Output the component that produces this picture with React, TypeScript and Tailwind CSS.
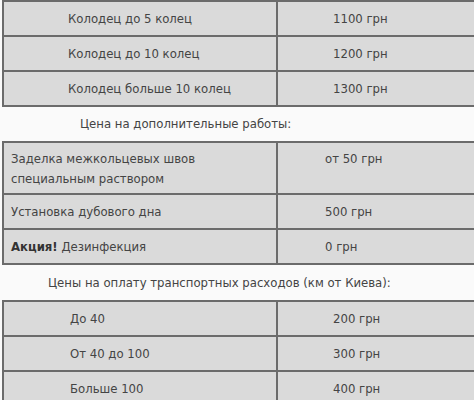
const mainRows = [
  { name: "Колодец до 5 колец", price: "1100 грн" },
  { name: "Колодец до 10 колец", price: "1200 грн" },
  { name: "Колодец больше 10 колец", price: "1300 грн" },
];

const transportRows = [
  { name: "До 40", price: "200 грн" },
  { name: "От 40 до 100", price: "300 грн" },
  { name: "Больше 100", price: "400 грн" },
];

function Row({
  left,
  right,
  leftClass = "pl-[64px]",
  rightClass = "pl-[55px]",
  h = "h-[35px]",
}: {
  left: React.ReactNode;
  right: React.ReactNode;
  leftClass?: string;
  rightClass?: string;
  h?: string;
}) {
  return (
    <div className={`flex ${h} border-b-2 border-[#6b6b6b]`}>
      <div className={`w-[274px] flex items-center border-r-2 border-[#6b6b6b] ${leftClass}`}>
        {left}
      </div>
      <div className={`flex-1 flex items-center ${rightClass}`}>{right}</div>
    </div>
  );
}

export default function App() {
  return (
    <div
      className="w-[474px] h-[400px] overflow-hidden bg-[#fafafa] text-[#444] text-[13px] pl-[2px]"
      style={{ fontFamily: "'DejaVu Sans Condensed', 'Liberation Sans', sans-serif" }}
    >
      {/* основные цены */}
      <div className="w-[478px] bg-[#dadada] border-l-2 border-t-2 border-[#6b6b6b]">
        {mainRows.map((r) => (
          <Row key={r.name} left={r.name} right={r.price} />
        ))}
      </div>

      <div className="h-[34px] flex items-center pl-[78px]">
        Цена на дополнительные работы:
      </div>

      <div className="w-[478px] bg-[#dadada] border-l-2 border-t-2 border-[#6b6b6b]">
        <Row
          h="h-[52px]"
          leftClass="pl-[7px] items-start pt-[6px] leading-[20px]"
          rightClass="pl-[47px] items-start pt-[6px] leading-[20px]"
          left={
            <span>
              Заделка межкольцевых швов
              <br />
              специальным раствором
            </span>
          }
          right="от 50 грн"
        />
        <Row leftClass="pl-[7px]" rightClass="pl-[47px]" left="Установка дубового дна" right="500 грн" />
        <Row
          leftClass="pl-[7px]"
          rightClass="pl-[47px]"
          left={
            <span>
              <b className="text-[#333]">Акция!</b> Дезинфекция
            </span>
          }
          right="0 грн"
        />
      </div>

      <div className="h-[35px] flex items-center pl-[46px]">
        Цены на оплату транспортных расходов (км от Киева):
      </div>

      <div className="w-[478px] bg-[#dadada] border-l-2 border-t-2 border-[#6b6b6b]">
        {transportRows.map((r) => (
          <Row key={r.name} leftClass="pl-[66px]" left={r.name} right={r.price} />
        ))}
      </div>
    </div>
  );
}
